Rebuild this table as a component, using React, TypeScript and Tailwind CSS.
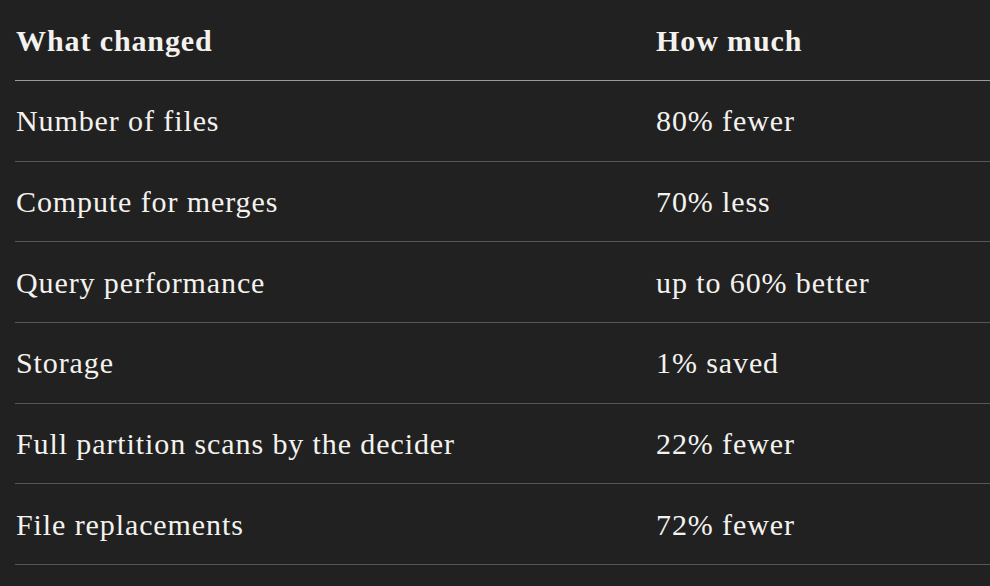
import React from "react";

const rows = [
  ["Number of files", "80% fewer"],
  ["Compute for merges", "70% less"],
  ["Query performance", "up to 60% better"],
  ["Storage", "1% saved"],
  ["Full partition scans by the decider", "22% fewer"],
  ["File replacements", "72% fewer"],
];

export default function App() {
  return (
    <div
      className="w-[990px] h-[586px] overflow-hidden bg-[#212121] text-[#f4f2ee] pl-[15px]"
      style={{ fontFamily: '"Liberation Serif", "DejaVu Serif", serif' }}
    >
      <div className="w-[1000px] text-[30px] tracking-[0.9px]">
        <div className="flex h-[81px] items-center border-b border-[#9a9a9a] font-bold">
          <div className="w-[641px] pl-px">What changed</div>
          <div>How much</div>
        </div>
        {rows.map(([what, much]) => (
          <div
            key={what}
            className="flex h-[80.67px] items-center border-b border-[#555555]"
          >
            <div className="w-[641px] pl-px">{what}</div>
            <div>{much}</div>
          </div>
        ))}
      </div>
    </div>
  );
}
